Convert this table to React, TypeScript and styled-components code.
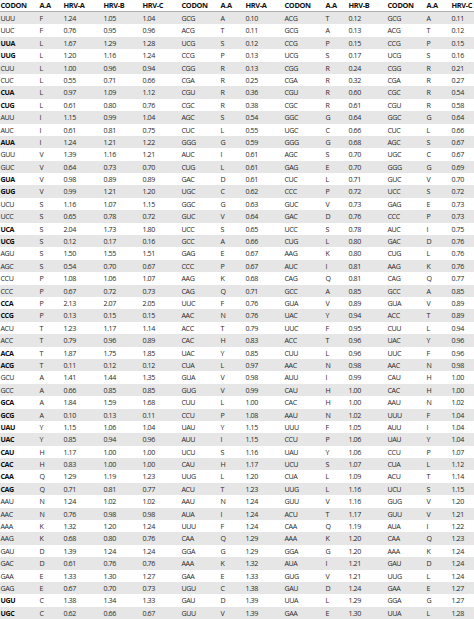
import React from "react";
import styled, { createGlobalStyle } from "styled-components";

const Global = createGlobalStyle`
  html, body { margin: 0; padding: 0; background: #fff; overflow: hidden; }
  body { font-family: "Open Sans", "Noto Sans", sans-serif; }
`;

const COLS = "39px 24px 40px 39px 39px 39px 25px 39px 41px 23px 39px 39px 25px 1fr";

const Table = styled.div`
  width: 474px;
  display: flex;
  flex-direction: column;
  color: #2a2a2a;
`;

const HeaderRow = styled.div`
  display: grid;
  grid-template-columns: ${COLS};
  padding-left: 0.5px;
  height: 11px;
  border-bottom: 1px solid #b0b0b0;
  white-space: nowrap;
`;

const HeadCell = styled.div`
  font-size: 7.4px;
  font-weight: 700;
  color: #111;
  line-height: 10px;
  letter-spacing: -0.35px;
`;

const Row = styled.div<{ $stripe: boolean }>`
  display: grid;
  grid-template-columns: ${COLS};
  padding-left: 0.5px;
  height: 12.4px;
  background: ${(p) => (p.$stripe ? "#e6e6e6" : "#ffffff")};
  white-space: nowrap;
`;

const Cell = styled.div<{ $bold?: boolean }>`
  font-size: 7.1px;
  line-height: 12.4px;
  letter-spacing: -0.4px;
  font-weight: ${(p) => (p.$bold ? 700 : 400)};
  color: ${(p) => (p.$bold ? "#0d0d0d" : "#2a2a2a")};
`;

const headers = [
  "CODON", "A.A", "HRV-A", "HRV-B", "HRV-C",
  "CODON", "A.A", "HRV-A",
  "CODON", "A.A", "HRV-B",
  "CODON", "A.A", "HRV-C",
];

const block1 = `UUU F 1.24 1.05 1.04
UUC F 0.76 0.95 0.96
UUA L 1.67 1.29 1.28
UUG L 1.20 1.16 1.24
CUU L 1.00 0.96 0.94
CUC L 0.55 0.71 0.66
CUA L 0.97 1.09 1.12
CUG L 0.61 0.80 0.76
AUU I 1.15 0.99 1.04
AUC I 0.61 0.81 0.75
AUA I 1.24 1.21 1.22
GUU V 1.39 1.16 1.21
GUC V 0.64 0.73 0.70
GUA V 0.98 0.89 0.89
GUG V 0.99 1.21 1.20
UCU S 1.16 1.07 1.15
UCC S 0.65 0.78 0.72
UCA S 2.04 1.73 1.80
UCG S 0.12 0.17 0.16
AGU S 1.50 1.55 1.51
AGC S 0.54 0.70 0.67
CCU P 1.08 1.06 1.07
CCC P 0.67 0.72 0.73
CCA P 2.13 2.07 2.05
CCG P 0.13 0.15 0.15
ACU T 1.23 1.17 1.14
ACC T 0.79 0.96 0.89
ACA T 1.87 1.75 1.85
ACG T 0.11 0.12 0.12
GCU A 1.41 1.44 1.35
GCC A 0.66 0.85 0.85
GCA A 1.84 1.59 1.68
GCG A 0.10 0.13 0.11
UAU Y 1.15 1.06 1.04
UAC Y 0.85 0.94 0.96
CAU H 1.17 1.00 1.00
CAC H 0.83 1.00 1.00
CAA Q 1.29 1.19 1.23
CAG Q 0.71 0.81 0.77
AAU N 1.24 1.02 1.02
AAC N 0.76 0.98 0.98
AAA K 1.32 1.20 1.24
AAG K 0.68 0.80 0.76
GAU D 1.39 1.24 1.24
GAC D 0.61 0.76 0.76
GAA E 1.33 1.30 1.27
GAG E 0.67 0.70 0.73
UGU C 1.38 1.34 1.33
UGC C 0.62 0.66 0.67`;

const block2 = `GCG A 0.10
ACG T 0.11
UCG S 0.12
CCG P 0.13
CGG R 0.13
CGA R 0.25
CGU R 0.36
CGC R 0.38
AGC S 0.54
CUC L 0.55
GGG G 0.59
AUC I 0.61
CUG L 0.61
GAC D 0.61
UGC C 0.62
GGC G 0.63
GUC V 0.64
UCC S 0.65
GCC A 0.66
GAG E 0.67
CCC P 0.67
AAG K 0.68
CAG Q 0.71
UUC F 0.76
AAC N 0.76
ACC T 0.79
CAC H 0.83
UAC Y 0.85
CUA L 0.97
GUA V 0.98
GUG V 0.99
CUU L 1.00
CCU P 1.08
UAU Y 1.15
AUU I 1.15
UCU S 1.16
CAU H 1.17
UUG L 1.20
ACU T 1.23
AAU N 1.24
AUA I 1.24
UUU F 1.24
CAA Q 1.29
GGA G 1.29
AAA K 1.32
GAA E 1.33
UGU C 1.38
GAU D 1.39
GUU V 1.39`;

const block3 = `ACG T 0.12
GCG A 0.13
CCG P 0.15
UCG S 0.17
CGG R 0.24
CGA R 0.32
CGU R 0.60
CGC R 0.61
GGC G 0.64
UGC C 0.66
GGG G 0.68
AGC S 0.70
GAG E 0.70
CUC L 0.71
CCC P 0.72
GUC V 0.73
GAC D 0.76
UCC S 0.78
CUG L 0.80
AAG K 0.80
AUC I 0.81
CAG Q 0.81
GCC A 0.85
GUA V 0.89
UAC Y 0.94
UUC F 0.95
ACC T 0.96
CUU L 0.96
AAC N 0.98
AUU I 0.99
CAU H 1.00
CAC H 1.00
AAU N 1.02
UUU F 1.05
CCU P 1.06
UAU Y 1.06
UCU S 1.07
CUA L 1.09
UUG L 1.16
GUU V 1.16
ACU T 1.17
CAA Q 1.19
AAA K 1.20
GGA G 1.20
AUA I 1.21
GUG V 1.21
GAU D 1.24
UUA L 1.29
GAA E 1.30`;

const block4 = `GCG A 0.11
ACG T 0.12
CCG P 0.15
UCG S 0.16
CGG R 0.21
CGA R 0.27
CGC R 0.54
CGU R 0.58
GGC G 0.64
CUC L 0.66
AGC S 0.67
UGC C 0.67
GGG G 0.69
GUC V 0.70
UCC S 0.72
GAG E 0.73
CCC P 0.73
AUC I 0.75
GAC D 0.76
CUG L 0.76
AAG K 0.76
CAG Q 0.77
GCC A 0.85
GUA V 0.89
ACC T 0.89
CUU L 0.94
UAC Y 0.96
UUC F 0.96
AAC N 0.98
CAU H 1.00
CAC H 1.00
AAU N 1.02
UUU F 1.04
AUU I 1.04
UAU Y 1.04
CCU P 1.07
CUA L 1.12
ACU T 1.14
UCU S 1.15
GUG V 1.20
GUU V 1.21
AUA I 1.22
CAA Q 1.23
AAA K 1.24
GAU D 1.24
UUG L 1.24
GAA E 1.27
GGA G 1.27
UUA L 1.28`;

const BOLD = new Set([
  "UUA", "UUG", "CUA", "CUG", "AUA", "GUA", "GUG", "UCA", "UCG", "CCA", "CCG",
  "ACA", "ACG", "GCA", "GCG", "UAU", "UAC", "CAU", "CAC", "CAA", "CAG", "UGU", "UGC",
]);

const split = (s: string) => s.split("\n").map((l) => l.trim().split(" "));
const b1 = split(block1);
const b2 = split(block2);
const b3 = split(block3);
const b4 = split(block4);
const rows = b1.map((r, i) => [...r, ...b2[i], ...b3[i], ...b4[i]]);

export default function App() {
  return (
    <>
      <Global />
      <Table>
        <HeaderRow>
          {headers.map((h, i) => (
            <HeadCell key={i}>{h}</HeadCell>
          ))}
        </HeaderRow>
        {rows.map((r, i) => (
          <Row key={i} $stripe={i % 2 === 0}>
            {r.map((c, j) => (
              <Cell key={j} $bold={j === 0 && BOLD.has(c)}>
                {c}
              </Cell>
            ))}
          </Row>
        ))}
      </Table>
    </>
  );
}
